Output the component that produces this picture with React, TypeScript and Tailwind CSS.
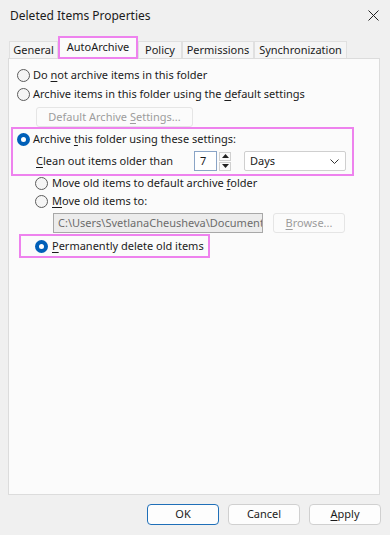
import React from 'react';

function Radio({ checked }: { checked?: boolean }) {
  if (checked) {
    return (
      <span className="w-[13px] h-[13px] rounded-full bg-[#005fb8] flex items-center justify-center shrink-0">
        <span className="w-[5px] h-[5px] rounded-full bg-white" />
      </span>
    );
  }
  return <span className="w-[13px] h-[13px] rounded-full border border-[#5c5c5c] bg-[#f5f5f5] shrink-0" />;
}

function U({ children }: { children: React.ReactNode }) {
  return <span className="underline underline-offset-2">{children}</span>;
}

function Tab({ label, w, active }: { label: string; w: string; active?: boolean }) {
  if (active) {
    return (
      <div className={`${w} h-[23px] flex items-center justify-center border-2 border-[#ee82ee] bg-[#fbfbfb] z-10`}>
        {label}
      </div>
    );
  }
  return (
    <div className={`${w} h-[18px] flex items-center justify-center border border-b-0 border-[#e0e0e0] bg-[#f5f5f5]`}>
      {label}
    </div>
  );
}

function Chevron({ up }: { up?: boolean }) {
  return (
    <svg width="7" height="4" viewBox="0 0 7 4">
      <path d={up ? 'M0 4 L3.5 0 L7 4 Z' : 'M0 0 L3.5 4 L7 0 Z'} fill="#222" />
    </svg>
  );
}

export default function App() {
  return (
    <div
      className="w-[390px] h-[535px] bg-[#f0f0f0] text-[11px] text-[#1b1b1b] flex flex-col overflow-hidden whitespace-nowrap"
      style={{ fontFamily: '"Noto Sans", "Open Sans", sans-serif' }}
    >
      {/* title bar */}
      <div className="h-[31px] pl-[10px] pr-[11px] flex items-center justify-between">
        <span className="text-[12px]">Deleted Items Properties</span>
        <svg width="11" height="11" viewBox="0 0 11 11">
          <path d="M0.5 0.5 L10.5 10.5 M10.5 0.5 L0.5 10.5" stroke="#222" strokeWidth="1" />
        </svg>
      </div>

      {/* tabs */}
      <div className="mt-[6px] pl-[9px] flex items-end h-[22px] -mb-[1px]">
        <Tab label="General" w="w-[49px]" />
        <Tab label="AutoArchive" w="w-[80px]" active />
        <Tab label="Policy" w="w-[44px]" />
        <Tab label="Permissions" w="w-[72px]" />
        <Tab label="Synchronization" w="w-[93px]" />
      </div>

      {/* panel */}
      <div className="ml-[8px] mr-[10px] h-[437px] border border-[#dcdcdc] bg-[#fbfbfb] pt-[7px] flex flex-col">
        <div className="h-[18px] pl-[8px] flex items-center gap-[3px]">
          <Radio />
          <span>Do <U>n</U>ot archive items in this folder</span>
        </div>
        <div className="h-[18px] mt-[1px] pl-[8px] flex items-center gap-[3px]">
          <Radio />
          <span>Archive items in this folder using the <U>d</U>efault settings</span>
        </div>
        <div className="mt-[4px] ml-[27px] w-[157px] h-[20px] border border-[#e5e5e5] rounded-[3px] bg-[#fbfbfb] flex items-center justify-center text-[#9d9d9d]">
          <span>Default Archive <U>S</U>ettings...</span>
        </div>

        <div className="ml-[2px] w-[343px] border-2 border-[#ee82ee] pt-[1px] pb-[3px]">
          <div className="h-[18px] pl-[4px] flex items-center gap-[3px]">
            <Radio checked />
            <span>Archive <U>t</U>his folder using these settings:</span>
          </div>
          <div className="mt-[3px] h-[20px] pl-[23px] flex items-center">
            <span className="w-[158px]"><U>C</U>lean out items older than</span>
            <div className="w-[23px] h-[20px] border border-[#8aa4c6] bg-white flex items-center pl-[5px]">7</div>
            <div className="ml-[2px] flex flex-col gap-[1px]">
              <div className="w-[12px] h-[9px] border border-[#d0d0d0] bg-[#fbfbfb] flex items-center justify-center"><Chevron up /></div>
              <div className="w-[12px] h-[9px] border border-[#d0d0d0] bg-[#fbfbfb] flex items-center justify-center"><Chevron /></div>
            </div>
            <div className="ml-[13px] w-[102px] h-[20px] border border-[#cfcfcf] rounded-[2px] bg-white flex items-center justify-between pl-[5px] pr-[6px]">
              <span>Days</span>
              <svg width="9" height="5" viewBox="0 0 9 5">
                <path d="M0.5 0.5 L4.5 4.5 L8.5 0.5" stroke="#333" strokeWidth="1" fill="none" />
              </svg>
            </div>
          </div>
        </div>

        <div className="h-[14px] pl-[26px] flex items-center gap-[4px]">
          <Radio />
          <span>Move old items to default archive <U>f</U>older</span>
        </div>
        <div className="h-[18px] mt-[2px] pl-[26px] flex items-center gap-[4px]">
          <Radio />
          <span><U>M</U>ove old items to:</span>
        </div>
        <div className="mt-[3px] pl-[44px] h-[20px] flex items-center">
          <div className="w-[210px] h-[20px] border border-[#a8a8a8] bg-[#ececec] text-[#6d6d6d] flex items-center pl-[4px] overflow-hidden">
            <span>C:\Users\SvetlanaCheusheva\Documents</span>
          </div>
          <div className="ml-[10px] w-[72px] h-[20px] border border-[#e5e5e5] rounded-[3px] bg-[#fbfbfb] flex items-center justify-center text-[#9d9d9d]">
            <span><U>B</U>rowse...</span>
          </div>
        </div>
        <div className="ml-[10px] mt-[1px] w-[191px] h-[24px] border-2 border-[#ee82ee] pl-[14px] flex items-center gap-[4px]">
          <Radio checked />
          <span><U>P</U>ermanently delete old items</span>
        </div>
      </div>

      {/* footer */}
      <div className="flex justify-end gap-[9px] pr-[9px] mt-[9px]">
        <div className="w-[72px] h-[21px] border border-[#1f6fb8] rounded-[4px] bg-[#fdfdfd] flex items-center justify-center">OK</div>
        <div className="w-[72px] h-[21px] border border-[#d0d0d0] rounded-[4px] bg-[#fdfdfd] flex items-center justify-center">Cancel</div>
        <div className="w-[72px] h-[21px] border border-[#d0d0d0] rounded-[4px] bg-[#fdfdfd] flex items-center justify-center"><span><U>A</U>pply</span></div>
      </div>
    </div>
  );
}
